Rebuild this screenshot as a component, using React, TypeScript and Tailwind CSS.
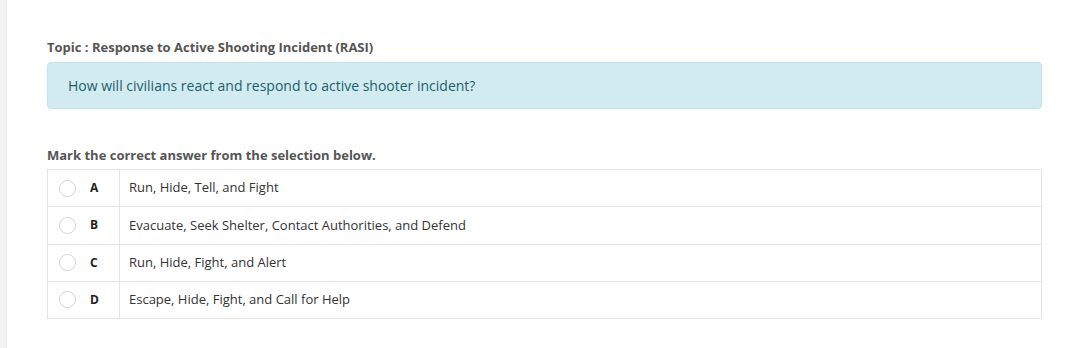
import React from "react";

const options = [
  { k: "A", t: "Run, Hide, Tell, and Fight" },
  { k: "B", t: "Evacuate, Seek Shelter, Contact Authorities, and Defend" },
  { k: "C", t: "Run, Hide, Fight, and Alert" },
  { k: "D", t: "Escape, Hide, Fight, and Call for Help" },
];

export default function App() {
  return (
    <div
      className="flex w-[1078px] h-[348px] bg-white"
      style={{ fontFamily: '"Open Sans", sans-serif' }}
    >
      <div className="w-[7px] h-full bg-[#f3f3f3] border-r border-[#ececec]" />
      <div className="flex-1 pl-[40px] pr-[36px] pt-[38px]">
        <div className="text-[13px] font-bold text-[#555] leading-[18px]">
          Topic : Response to Active Shooting Incident (RASI)
        </div>
        <div className="mt-[6px] h-[47px] rounded-[4px] border border-[#bee5eb] bg-[#d1ebf0] flex items-center pl-[20px] text-[14px] text-[#1d5f6b]">
          How will civilians react and respond to active shooter incident?
        </div>
        <div className="mt-[37px] text-[13px] font-bold text-[#555] leading-[18px]">
          Mark the correct answer from the selection below.
        </div>
        <div className="mt-[5px] border border-[#e3e3e3]">
          {options.map((o, i) => (
            <div
              key={o.k}
              className={`flex h-[36.25px] ${i > 0 ? "border-t border-[#e3e3e3] h-[37.25px]" : ""}`}
            >
              <div className="w-[72px] flex items-center border-r border-[#e3e3e3] pl-[11px]">
                <span className="w-[17px] h-[17px] rounded-full border border-[#cfd4da] bg-white" />
                <span className="ml-[14px] text-[12px] font-bold text-[#222]">{o.k}</span>
              </div>
              <div className="flex items-center pl-[9px] text-[13px] text-[#333]">{o.t}</div>
            </div>
          ))}
        </div>
      </div>
    </div>
  );
}
